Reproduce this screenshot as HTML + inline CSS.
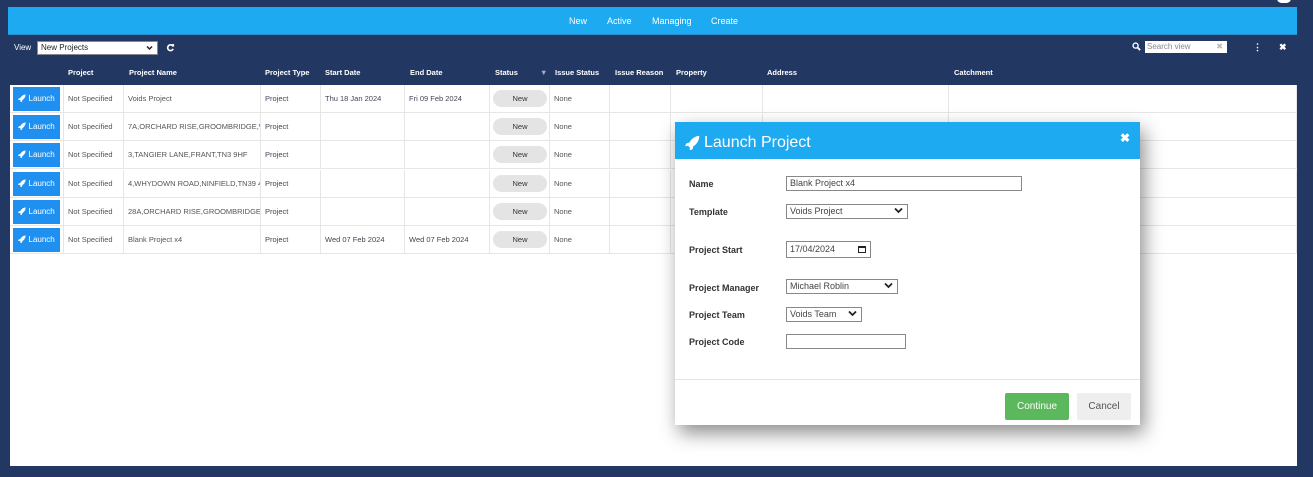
<!DOCTYPE html>
<html><head><style>
*{box-sizing:border-box;margin:0;padding:0}
body{width:1313px;height:477px;background:#223862;font-family:"Liberation Sans",sans-serif;position:relative;overflow:hidden;font-size:8px;color:#333}
.a{position:absolute}
.nav{left:8px;top:7px;width:1289px;height:28px;background:#1eaaf1;border-bottom:1px solid #2a8fd0}
.nav span{position:absolute;top:9px;color:#fff;font-size:9px}
.hd{color:#fff;font-weight:bold;font-size:7.5px;top:68px}
.tbl{left:10px;top:85px;width:1287px;height:381px;background:#fff}
.row{position:absolute;left:0;width:1287px;height:28px;border-bottom:1px solid #e6e6e6}
.c{position:absolute;top:0;height:100%;border-right:1px solid #e6e6e6;font-size:7.5px;color:#555;line-height:28px;white-space:nowrap;overflow:hidden}
.btn{position:absolute;left:3px;top:2px;width:47px;height:24px;background:#1f90f0;color:#fff;font-size:8px;line-height:24px;text-align:center}
.pill{position:absolute;left:3px;top:5px;width:54px;height:17px;border-radius:9px;background:#e4e4e4;color:#333;font-size:7.5px;line-height:17px;text-align:center}
.modal{left:675px;top:122px;width:465px;height:303px;background:#fff;box-shadow:4px 8px 18px rgba(0,0,0,.45)}
.mh{position:absolute;left:0;top:0;width:100%;height:37px;background:#1eaaf1;color:#fff;font-size:16px}
.lb{position:absolute;left:14px;font-size:9px;color:#333;font-weight:bold}
.in{position:absolute;left:111px;height:15px;border:1px solid #888;font-size:9px;color:#444;padding-left:3px;line-height:13px;background:#fff}
.chev{position:absolute;right:4px;top:2px}
</style></head><body>
<div class="a nav"><span style="left:561px">New</span><span style="left:599px">Active</span><span style="left:644px">Managing</span><span style="left:703px">Create</span></div>
<div class="a" style="left:14px;top:43px;color:#fff;font-size:8px">View</div>
<div class="a" style="left:37px;top:41px;width:121px;height:14px;background:#fff;border:1px solid #888;font-size:8px;line-height:12px;padding-left:3px;color:#222">New Projects<svg class="chev" style="top:3px" width="7" height="6" viewBox="0 0 7 6"><path d="M1 1.5l2.5 2.5 2.5-2.5" stroke="#222" stroke-width="1.5" fill="none"/></svg></div>
<svg class="a" style="left:166px;top:43px" width="9" height="9" viewBox="0 0 10 10"><path d="M8 4A3.2 3.2 0 1 0 8 6.5" stroke="#fff" stroke-width="1.8" fill="none"/><path d="M6 1.5L9 1v3.5z" fill="#fff"/></svg>
<svg class="a" style="left:1132px;top:42px" width="9" height="9" viewBox="0 0 10 10"><circle cx="4" cy="4" r="2.8" stroke="#fff" stroke-width="1.5" fill="none"/><path d="M6 6l3 3" stroke="#fff" stroke-width="2"/></svg>
<div class="a" style="left:1145px;top:41px;width:82px;height:12px;background:#fff;font-size:8px;color:#888;line-height:12px;padding-left:2px">Search view<span style="position:absolute;right:4px;color:#bbb">✖</span></div>
<div class="a" style="left:1253px;top:42px;color:#fff;font-size:9px;font-weight:bold">⋮</div>
<div class="a" style="left:1279px;top:42px;color:#fff;font-size:9px;font-weight:bold">✖</div>
<div class="a" style="left:1277px;top:-6px;width:14px;height:9px;border-radius:6px;background:#fff"></div>
<div class="a hd" style="left:68px">Project</div><div class="a hd" style="left:129px">Project Name</div><div class="a hd" style="left:265px">Project Type</div><div class="a hd" style="left:325px">Start Date</div><div class="a hd" style="left:410px">End Date</div><div class="a hd" style="left:495px">Status</div><div class="a hd" style="left:540px;color:#aac">▼</div><div class="a hd" style="left:555px">Issue Status</div><div class="a hd" style="left:615px">Issue Reason</div><div class="a hd" style="left:676px">Property</div><div class="a hd" style="left:767px">Address</div><div class="a hd" style="left:954px">Catchment</div>
<div class="a tbl"></div>
<script>
var data=[["Voids Project","Thu 18 Jan 2024","Fri 09 Feb 2024"],["7A,ORCHARD RISE,GROOMBRIDGE,W","",""],["3,TANGIER LANE,FRANT,TN3 9HF","",""],["4,WHYDOWN ROAD,NINFIELD,TN39 4F","",""],["28A,ORCHARD RISE,GROOMBRIDGE,W","",""],["Blank Project x4","Wed 07 Feb 2024","Wed 07 Feb 2024"]];
var cols=[0,54,114,251,311,395,480,540,600,661,753,939,1287];
var h="";
var tops=[0,28,56,85,113,141];
data.forEach(function(d,i){
 h+='<div class="row" style="top:'+tops[i]+'px">';
 var txt=['<div class="btn"><svg width="8" height="8" viewBox="0 0 10 10" style="vertical-align:-1px"><path d="M9.5.5C6 1 4 3 3 5L1 5.5 0 7.5l2-.3 1.3 1.3L3 10.5l2-1 .5-2C7.5 6.5 9.5 4 9.5.5z" fill="#fff"/></svg> Launch</div>',"Not Specified",d[0],"Project",d[1],d[2],'<div class="pill">New</div>',"None","","","",""];
 for(var c=0;c<12;c++){h+='<div class="c" style="left:'+cols[c]+'px;width:'+(cols[c+1]-cols[c])+'px;padding-left:4px'+(c>=3&&c<=5?';color:#445':'')+'">'+txt[c]+'</div>';}
 h+='</div>';
});
document.querySelector('.tbl').innerHTML=h;
</script>
<div class="a modal">
<div class="mh"><svg style="position:absolute;left:10px;top:13px" width="15" height="15" viewBox="0 0 10 10"><path d="M9.5.5C6 1 4 3 3 5L1 5.5 0 7.5l2-.3 1.3 1.3L3 10.5l2-1 .5-2C7.5 6.5 9.5 4 9.5.5z" fill="#fff"/></svg><span style="position:absolute;left:29px;top:12px">Launch Project</span><span style="position:absolute;right:10px;top:9px;font-size:12px;font-weight:bold">✖</span></div>
<div class="lb" style="top:57px">Name</div><div class="in" style="top:54px;width:236px">Blank Project x4</div>
<div class="lb" style="top:85px">Template</div><div class="in" style="top:82px;width:122px">Voids Project<svg class="chev" width="9" height="7" viewBox="0 0 9 7"><path d="M1 1.5l3.5 3.5 3.5-3.5" stroke="#222" stroke-width="1.8" fill="none"/></svg></div>
<div class="lb" style="top:123px">Project Start</div><div class="in" style="top:119px;width:85px;height:17px;line-height:15px">17/04/2024<span style="position:absolute;right:4px;top:4px;width:8px;height:7px;border:1.3px solid #222;border-top-width:2.5px"></span></div>
<div class="lb" style="top:161px">Project Manager</div><div class="in" style="top:157px;width:112px">Michael Roblin<svg class="chev" width="9" height="7" viewBox="0 0 9 7"><path d="M1 1.5l3.5 3.5 3.5-3.5" stroke="#222" stroke-width="1.8" fill="none"/></svg></div>
<div class="lb" style="top:188px">Project Team</div><div class="in" style="top:185px;width:76px">Voids Team<svg class="chev" width="9" height="7" viewBox="0 0 9 7"><path d="M1 1.5l3.5 3.5 3.5-3.5" stroke="#222" stroke-width="1.8" fill="none"/></svg></div>
<div class="lb" style="top:215px">Project Code</div><div class="in" style="top:212px;width:120px"></div>
<div style="position:absolute;left:0;top:257px;width:100%;border-top:1px solid #e5e5e5"></div>
<div style="position:absolute;left:330px;top:271px;width:64px;height:27px;background:#5cb85c;color:#fff;font-size:10px;line-height:27px;text-align:center;border-radius:2px">Continue</div>
<div style="position:absolute;left:402px;top:271px;width:54px;height:27px;background:#eee;color:#555;font-size:10px;line-height:27px;text-align:center;border-radius:2px">Cancel</div>
</div>
</body></html>
